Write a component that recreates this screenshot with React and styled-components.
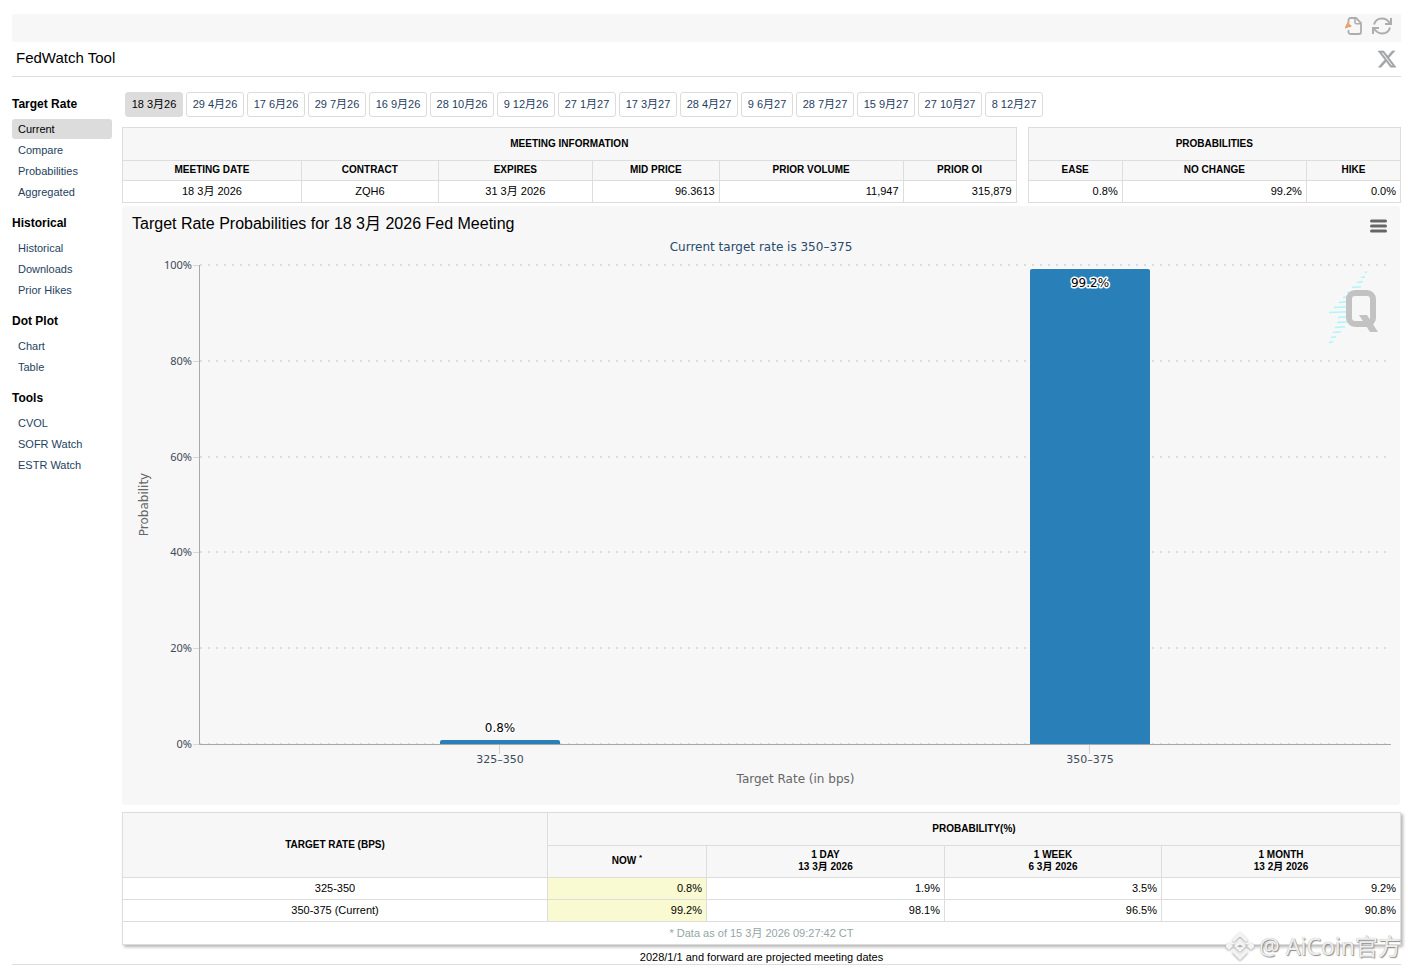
import { useLayoutEffect, useRef, useState } from "react";
import styled, { createGlobalStyle } from "styled-components";
import { FaXTwitter } from "react-icons/fa6";

const GlobalStyle = createGlobalStyle`
    * {
        box-sizing: border-box;
    }

    body {
        margin: 0;
        background: #ffffff;
        color: #000000;
        font-family: "Liberation Sans", Arial, "Noto Sans CJK SC", sans-serif;
        font-size: 11px;
    }

    button {
        font: inherit;
        cursor: pointer;
    }
`;

const Page = styled.div`
    position: relative;
    padding: 14px 7px 0 12px;
`;

const Toolbar = styled.div`
    display: flex;
    justify-content: flex-end;
    align-items: center;
    gap: 10px;
    height: 28px;
    padding: 0 9px 4px 0;
    background: #f7f7f7;
`;

const IconButton = styled.button`
    display: flex;
    padding: 0;
    border: 0;
    background: none;
    color: #adadad;
`;

const Header = styled.header`
    display: flex;
    justify-content: space-between;
    align-items: center;
    height: 35px;
    padding: 0 4px 3px;
    border-bottom: 1px solid #dddddd;
`;

const PageTitle = styled.h1`
    margin: 0;
    font-size: 15px;
    font-weight: 400;
`;

const ShareLink = styled.a`
    display: flex;
    padding-top: 3px;
    color: #a3a5a8;

    path {
        stroke: currentColor;
        stroke-width: 14px;
    }
`;

const Body = styled.div`
    display: flex;
    gap: 10px;
    border-bottom: 1px solid #dddddd;
`;

const Sidebar = styled.nav`
    display: flex;
    flex-direction: column;
    flex-shrink: 0;
    gap: 11px;
    width: 100px;
    padding-top: 17px;
`;

const GroupTitle = styled.h2`
    margin: 0 0 5px;
    font-size: 12px;
    line-height: 20px;
`;

const GroupLinks = styled.div`
    display: flex;
    flex-direction: column;
    gap: 1px;
`;

const SideLink = styled.a`
    height: 20px;
    padding: 0 6px;
    border-radius: 3px;
    line-height: 20px;
    text-decoration: none;
    color: ${({$active}) => $active ? "#000000" : "#253f5e"};
    background: ${({$active}) => $active ? "#dcdcdc" : "transparent"};
`;

const Main = styled.main`
    flex-grow: 1;
    min-width: 0;
    padding-top: 15px;
`;

const Tabs = styled.div`
    display: flex;
    flex-wrap: wrap;
    gap: 3px;
    margin: 0 3px 10px;
`;

const Tab = styled.button`
    width: ${({$length}) => $length * 6 + 16}px;
    height: 25px;
    padding: 0 0 3px;
    border: 1px solid #dcdcdc;
    border-radius: 3px;
    white-space: nowrap;
    color: ${({$active}) => $active ? "#000000" : "#1f3d5f"};
    background: ${({$active}) => $active ? "#dcdcdc" : "#ffffff"};
`;

const Summary = styled.div`
    display: flex;
    gap: 11px;
    margin-bottom: 3px;
`;

const Table = styled.table`
    flex: ${({$grow}) => $grow ?? 1} 1 0;
    width: 100%;
    table-layout: fixed;
    border-collapse: collapse;
    box-shadow: ${({$raised}) => $raised ? "2px 2px 3px #b4b4b4" : "none"};
`;

const Row = styled.tr`
    height: ${({$height}) => $height}px;
`;

const HeadCell = styled.th`
    padding: 0 4px ${({$sub}) => $sub ? 2 : 0}px;
    border: 1px solid #dddddd;
    background: #f7f7f7;
    font-size: 10px;
    line-height: 12px;

    sup {
        font-size: 8px;
        line-height: 0;
    }
`;

const Cell = styled.td`
    padding: 0 4px ${({$muted}) => $muted ? 0 : 2}px;
    border: 1px solid #dddddd;
    text-align: ${({$align}) => $align ?? "right"};
    line-height: 14px;
    color: ${({$muted}) => $muted ? "#95a5a6" : "#000000"};
    background: ${({$highlight}) => $highlight ? "#f9f9d2" : "#ffffff"};
`;

const ChartPanel = styled.section`
    margin: 0 1px 7px 0;
    border-radius: 3px;
    background: #f7f7f7;
`;

const ChartHeader = styled.div`
    display: flex;
    justify-content: space-between;
    align-items: center;
    height: 34px;
    padding: 0 13px 3px 10px;
`;

const ChartTitle = styled.h2`
    margin: 0;
    font-size: 16px;
    font-weight: 400;
`;

const MenuButton = styled(IconButton)`
    padding-top: 8px;
    color: #666666;
`;

const ChartSubtitle = styled.p`
    margin: 0;
    height: 14px;
    line-height: 14px;
    text-align: center;
    font-family: "DejaVu Sans", sans-serif;
    font-size: 12px;
    color: #274b6d;
`;

const ChartSvg = styled.svg`
    display: block;
    width: 100%;
    height: 551px;
    font-size: 11px;
    fill: #3e4a58;
`;

const ValueLabel = styled.text`
    font-family: "Noto Sans", sans-serif;
    text-anchor: end;
`;

const CategoryLabel = styled.text`
    font-family: "DejaVu Sans", sans-serif;
    text-anchor: middle;
`;

const AxisTitle = styled.text`
    font-family: "DejaVu Sans", sans-serif;
    font-size: 12px;
    fill: #666666;
    text-anchor: middle;
`;

const DataLabel = styled.text`
    font-family: "DejaVu Sans", sans-serif;
    font-size: 12px;
    fill: #000000;
    stroke: #ffffff;
    stroke-width: 3px;
    stroke-linejoin: round;
    paint-order: stroke;
    text-anchor: middle;
`;

const Footnote = styled.p`
    margin: 6px 0 0;
    line-height: 13px;
    text-align: center;
`;

const Watermark = styled.div`
    position: absolute;
    right: 7px;
    bottom: 4px;
    display: flex;
    align-items: center;
    gap: 5px;
    line-height: 30px;
    font-family: "Noto Sans", "Noto Sans CJK SC", sans-serif;
    font-size: 23px;
    color: #eeeeee;
    text-shadow: 1px 1px 1px #8c8c8c, 0 0 1px #b0b0b0;
    white-space: nowrap;

    svg {
        filter: drop-shadow(0 1px 1px #a0a0a0);
    }
`;

const groups = [
    { title: "Target Rate", links: ["Current", "Compare", "Probabilities", "Aggregated"] },
    { title: "Historical", links: ["Historical", "Downloads", "Prior Hikes"] },
    { title: "Dot Plot", links: ["Chart", "Table"] },
    { title: "Tools", links: ["CVOL", "SOFR Watch", "ESTR Watch"] },
];

const meetings = [
    "18 3月26", "29 4月26", "17 6月26", "29 7月26", "16 9月26", "28 10月26", "9 12月26", "27 1月27",
    "17 3月27", "28 4月27", "9 6月27", "28 7月27", "15 9月27", "27 10月27", "8 12月27",
];

const meetingInfo = {
    title: "Meeting Information",
    grow: 895,
    columns: [
        { label: "Meeting Date", value: "18 3月 2026", width: 179, align: "center" },
        { label: "Contract", value: "ZQH6", width: 137, align: "center" },
        { label: "Expires", value: "31 3月 2026", width: 154, align: "center" },
        { label: "Mid Price", value: "96.3613", width: 127 },
        { label: "Prior Volume", value: "11,947", width: 184 },
        { label: "Prior OI", value: "315,879", width: 113 },
    ],
};

const probabilities = {
    title: "Probabilities",
    grow: 373,
    columns: [
        { label: "Ease", value: "0.8%", width: 94 },
        { label: "No Change", value: "99.2%", width: 184 },
        { label: "Hike", value: "0.0%", width: 94 },
    ],
};

const history = [
    { rate: "325-350", values: ["0.8%", "1.9%", "3.5%", "9.2%"] },
    { rate: "350-375 (Current)", values: ["99.2%", "98.1%", "96.5%", "90.8%"] },
];

const bars = [
    { label: "325–350", value: 0.8 },
    { label: "350–375", value: 99.2 },
];

const Columns = ({ widths }) => {
    const total = widths.reduce((sum, width) => sum + width, 0);

    return (
        <colgroup>
            {widths.map((width, index) => (
                <col key={index} style={{ width: `${100 * width / total}%` }}/>
            ))}
        </colgroup>
    );
};

const SummaryTable = ({ title, grow, columns }) => (
    <Table $grow={grow}>
        <Columns widths={columns.map(({ width }) => width)}/>
        <thead>
            <Row $height={33}>
                <HeadCell colSpan={columns.length}>{title.toUpperCase()}</HeadCell>
            </Row>
            <Row $height={20}>
                {columns.map(({ label }) => <HeadCell key={label} $sub>{label.toUpperCase()}</HeadCell>)}
            </Row>
        </thead>
        <tbody>
            <Row $height={22}>
                {columns.map(({ label, value, align }) => <Cell key={label} $align={align}>{value}</Cell>)}
            </Row>
        </tbody>
    </Table>
);

const PdfIcon = () => (
    <svg width="17" height="18" viewBox="0 0 17 18" fill="none" stroke="#adadad" strokeWidth="1.800">
        <path d="M3.500 6V3c0-1.200.8-2 2-2H11l5 5v9c0 1.200-.8 2-2 2H5.500c-1.200 0-2-.8-2-2v-2"/>
        <path d="M10 1v4.500c0 .8.4 1.200 1.200 1.200H16" strokeWidth="1.500"/>
        <path d="M.8 10.500C1.500 8.500 2.300 7 3.200 6c.6 1.700 1.600 2.900 3 3.300-2 .1-3.800.5-5.400 1.200z" fill="#f0b080" stroke="#e8a06a" strokeWidth="1.500"/>
    </svg>
);

const RefreshIcon = () => (
    <svg width="20" height="18" viewBox="0 0 20 18" fill="none" stroke="currentColor" strokeWidth="2">
        <path d="M2 7.500C3 4 6 1.500 10 1.500c3.500 0 6 1.800 8 4.700"/>
        <path d="M19 1v6h-6"/>
        <path d="M18 10.500c-1 3.500-4 6-8 6-3.500 0-6-1.800-8-4.700"/>
        <path d="M1 17v-6h6"/>
    </svg>
);

const MenuIcon = () => (
    <svg width="17" height="14" viewBox="0 0 17 14" stroke="currentColor" strokeWidth="3" strokeLinecap="round">
        <path d="M1.500 2h14M1.500 7h14M1.500 12h14"/>
    </svg>
);

// Stripes of the Q mark: start, end, height
const stripes = [
    [36, 37, 1], [32, 35, 6], [28, 33, 11], [23, 31, 16], [18, 27, 21], [14, 18, 26], [10, 18, 31],
    [5, 18, 36], [0, 18, 41], [9, 18, 46], [8, 20, 51], [6, 15, 56], [4, 11, 61], [2, 6, 66], [0, 3, 71],
];

const QMark = ({ x, y }) => (
    <g transform={`translate(${x} ${y})`} fill="none">
        {stripes.map(([from, to, top]) => (
            <path key={top} d={`M${from} ${top + 0.6}L${to + 1} ${top - 0.2}`} stroke="#b0f5fa" strokeWidth="1.500"/>
        ))}
        <rect x="20" y="22" width="24" height="31" rx="6" stroke="#c2c2c2" strokeWidth="6"/>
        <path d="M30 44h8l11 17h-8z" fill="#c2c2c2"/>
    </g>
);

const Chart = () => {
    const ref = useRef(null);
    const [width, setWidth] = useState(1278);

    useLayoutEffect(() => {
        const update = () => setWidth(ref.current.getBoundingClientRect().width);
        const observer = new ResizeObserver(update);
        update();
        observer.observe(ref.current);
        return () => observer.disconnect();
    }, []);

    const left = 78;
    const right = Math.round(width) - 9;
    const top = 11;
    const bottom = 490;
    const inset = 5;
    const step = (right - left - inset * 2) / bars.length;
    const getY = (value) => Math.round(bottom - (bottom - top) * value / 100);

    return (
        <ChartSvg ref={ref} role="img" aria-label="Target rate probabilities">
            {[0, 20, 40, 60, 80, 100].map((value) => (
                <g key={value}>
                    <path d={`M${left} ${getY(value)}H${right - 4}`} stroke="#dcdcdc" strokeWidth="2" strokeDasharray="2 6"/>
                    <path d={`M${left - 7} ${getY(value) + 0.5}H${left}`} stroke="#d8d8d8"/>
                    <ValueLabel x={left - 8} y={getY(value) + 4}>{value}%</ValueLabel>
                </g>
            ))}
            <QMark x={right - 62} y={17}/>
            {bars.map(({ label, value }, index) => {
                const center = Math.floor(left + inset + step * (index + 0.5));
                const y = getY(value);

                return (
                    <g key={label}>
                        <path
                            d={`M${center - 60} ${bottom}V${y + 2}q0 -2 2 -2h116q2 0 2 2V${bottom}z`}
                            fill="#2980b9"
                        />
                        <path d={`M${center - 0.5} ${bottom + 1}v9`} stroke="#d0d0d0"/>
                        <CategoryLabel x={center} y={bottom + 19}>{label}</CategoryLabel>
                        <DataLabel x={center} y={value > 50 ? y + 18 : y - 8}>{value}%</DataLabel>
                    </g>
                );
            })}
            <path d={`M${left - 0.5} ${top}V${bottom + 0.5}H${right}`} fill="none" stroke="#a8a8a8"/>
            <AxisTitle x={(left + right) / 2} y={bottom + 39}>Target Rate (in bps)</AxisTitle>
            <AxisTitle transform={`translate(26 ${(top + bottom) / 2}) rotate(-90)`}>Probability</AxisTitle>
        </ChartSvg>
    );
};

const HistoryTable = () => (
    <Table $raised>
        <Columns widths={[425, 159, 238, 217, 239]}/>
        <thead>
            <Row $height={33}>
                <HeadCell rowSpan={2}>TARGET RATE (BPS)</HeadCell>
                <HeadCell colSpan={4}>PROBABILITY(%)</HeadCell>
            </Row>
            <Row $height={32}>
                <HeadCell $sub>NOW <sup>*</sup></HeadCell>
                <HeadCell $sub>1 DAY<br/>13 3月 2026</HeadCell>
                <HeadCell $sub>1 WEEK<br/>6 3月 2026</HeadCell>
                <HeadCell $sub>1 MONTH<br/>13 2月 2026</HeadCell>
            </Row>
        </thead>
        <tbody>
            {history.map(({ rate, values }) => (
                <Row key={rate} $height={22}>
                    <Cell $align="center">{rate}</Cell>
                    {values.map((value, index) => <Cell key={value} $highlight={index === 0}>{value}</Cell>)}
                </Row>
            ))}
            <Row $height={23}>
                <Cell colSpan={5} $align="center" $muted>* Data as of 15 3月 2026 09:27:42 CT</Cell>
            </Row>
        </tbody>
    </Table>
);

const App = () => {
    const [meeting, setMeeting] = useState(meetings[0]);

    return (
        <>
            <GlobalStyle/>
            <Page>
                <Toolbar>
                    <IconButton aria-label="Export to PDF"><PdfIcon/></IconButton>
                    <IconButton aria-label="Refresh"><RefreshIcon/></IconButton>
                </Toolbar>
                <Header>
                    <PageTitle>FedWatch Tool</PageTitle>
                    <ShareLink href="#share" aria-label="Share on X"><FaXTwitter size={20}/></ShareLink>
                </Header>
                <Body>
                    <Sidebar>
                        {groups.map(({ title, links }) => (
                            <div key={title}>
                                <GroupTitle>{title}</GroupTitle>
                                <GroupLinks>
                                    {links.map((link) => (
                                        <SideLink key={link} href="#" $active={link === "Current"}>{link}</SideLink>
                                    ))}
                                </GroupLinks>
                            </div>
                        ))}
                    </Sidebar>
                    <Main>
                        <Tabs>
                            {meetings.map((item) => (
                                <Tab
                                    key={item}
                                    $length={item.length}
                                    $active={item === meeting}
                                    onClick={() => setMeeting(item)}
                                >
                                    {item}
                                </Tab>
                            ))}
                        </Tabs>
                        <Summary>
                            <SummaryTable {...meetingInfo}/>
                            <SummaryTable {...probabilities}/>
                        </Summary>
                        <ChartPanel>
                            <ChartHeader>
                                <ChartTitle>Target Rate Probabilities for 18 3月 2026 Fed Meeting</ChartTitle>
                                <MenuButton aria-label="Chart menu"><MenuIcon/></MenuButton>
                            </ChartHeader>
                            <ChartSubtitle>Current target rate is 350–375</ChartSubtitle>
                            <Chart/>
                        </ChartPanel>
                        <HistoryTable/>
                        <Footnote>2028/1/1 and forward are projected meeting dates</Footnote>
                    </Main>
                </Body>
                <Watermark>
                    <svg width="28" height="28" viewBox="0 0 28 28" fill="none" stroke="#f4f4f4" strokeWidth="3">
                        <path d="M7 9l7-7 7 7M7 19l7 7 7-7M14 10l4 4-4 4-4-4zM3 12l2 2-2 2-2-2zM25 12l2 2-2 2-2-2z"/>
                    </svg>
                    <span>@ AiCoin官方</span>
                </Watermark>
            </Page>
        </>
    );
};

export default App;
